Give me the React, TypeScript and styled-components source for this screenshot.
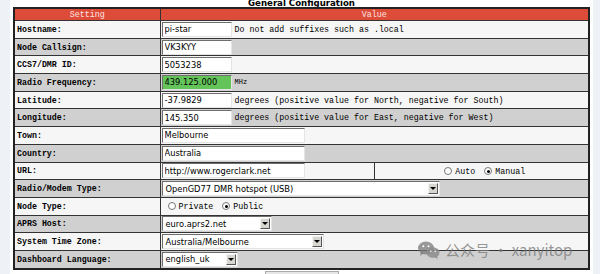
import React from 'react';
import styled, { createGlobalStyle } from 'styled-components';

const GlobalStyle = createGlobalStyle`
  html, body {
    margin: 0;
    padding: 0;
    background: #eef1f5;
    overflow: hidden;
  }
`;

const Page = styled.div`
  width: 600px;
  height: 274px;
  display: flex;
  background: #eef1f5;
  overflow: hidden;
  position: relative;
`;

const Content = styled.div`
  margin-left: 10px;
  width: 583px;
  background: #ffffff;
  display: flex;
  flex-direction: column;
  align-items: center;
`;

const Title = styled.div`
  font-family: 'DejaVu Sans', Verdana, sans-serif;
  font-weight: bold;
  font-size: 8.6px;
  line-height: 10px;
  margin-top: -2px;
  margin-bottom: -1px;
  color: #000;
  text-align: center;
`;

const Table = styled.table`
  width: 577px;
  border-collapse: collapse;
  border: 2px solid #222;
  table-layout: fixed;
  font-family: 'Liberation Mono', 'Courier New', monospace;
  font-size: 8.3px;
`;

const HeadCell = styled.th`
  background: #dd4b39;
  color: #ffe4e0;
  font-weight: normal;
  height: 11px;
  padding: 0;
  border: 1px solid #333;
  text-align: center;
  line-height: 11px;
`;

const Row = styled.tr<{ $shade: boolean }>`
  background: ${({ $shade }) => ($shade ? '#d0d0d0' : '#f6f6f6')};
`;

const Label = styled.td`
  height: 16.7px;
  padding: 0 0 0 2px;
  border: 1px solid #333;
  font-weight: bold;
  white-space: nowrap;
  color: #000;
`;

const Value = styled.td`
  padding: 0 0 0 1px;
  border: 1px solid #333;
  white-space: nowrap;
  color: #000;
`;

const Centered = styled(Value)`
  text-align: center;
`;

const Input = styled.input<{ $w: number; $bg?: string }>`
  box-sizing: border-box;
  width: ${({ $w }) => $w}px;
  height: 15px;
  margin: 0;
  padding: 0 2px;
  vertical-align: middle;
  font-family: 'DejaVu Sans', Verdana, sans-serif;
  font-size: 8.3px;
  color: #000;
  background: ${({ $bg }) => $bg || '#ffffff'};
  border: 1px solid;
  border-color: #6e6e6e #e4e4e4 #e4e4e4 #6e6e6e;
  outline: none;
`;

const Note = styled.span`
  margin-left: 3px;
  vertical-align: middle;
`;

const SmallNote = styled(Note)`
  font-size: 7px;
`;

const SelectBox = styled.span<{ $w: number }>`
  box-sizing: border-box;
  display: inline-flex;
  align-items: center;
  justify-content: space-between;
  width: ${({ $w }) => $w}px;
  height: 15px;
  vertical-align: middle;
  background: #fff;
  border: 1px solid;
  border-color: #6e6e6e #e4e4e4 #e4e4e4 #6e6e6e;
  font-family: 'DejaVu Sans', Verdana, sans-serif;
  font-size: 8.3px;
  padding-left: 3px;
`;

const Arrow = styled.span`
  box-sizing: border-box;
  width: 10px;
  height: 11px;
  margin-right: 1px;
  background: #d8d6d0;
  border: 1px solid;
  border-color: #f4f4f4 #555 #555 #f4f4f4;
  display: flex;
  align-items: center;
  justify-content: center;

  &::after {
    content: '';
    border-left: 3px solid transparent;
    border-right: 3px solid transparent;
    border-top: 3px solid #000;
  }
`;

const RadioGroup = styled.span`
  display: inline-flex;
  align-items: center;
  gap: 3px;
  vertical-align: middle;
`;

const RadioDot = styled.span<{ $on: boolean }>`
  box-sizing: border-box;
  width: 8px;
  height: 8px;
  border-radius: 50%;
  border: 1px solid #777;
  background: #fff;
  display: inline-flex;
  align-items: center;
  justify-content: center;
  margin-left: 6px;

  &::after {
    content: '';
    width: 3px;
    height: 3px;
    border-radius: 50%;
    background: ${({ $on }) => ($on ? '#000' : 'transparent')};
  }
`;

const ButtonRow = styled.div`
  margin-top: 1px;
`;

const ApplyButton = styled.button`
  width: 74px;
  height: 20px;
  background: #e6e6e6;
  border: 1px solid #aaa;
`;

const Watermark = styled.div`
  position: absolute;
  left: 418px;
  top: 240px;
  display: flex;
  align-items: center;
  gap: 5px;
  color: rgba(120, 120, 120, 0.75);
  font-family: 'Noto Sans CJK SC', 'Noto Sans', sans-serif;
  font-size: 15px;
  line-height: 20px;
  pointer-events: none;
`;

const Radio = ({ on, label }: { on: boolean; label: string }) => (
  <>
    <RadioDot $on={on} />
    <span>{label}</span>
  </>
);

const Select = ({ w, text }: { w: number; text: string }) => (
  <SelectBox $w={w}>
    <span>{text}</span>
    <Arrow />
  </SelectBox>
);

const WeChatIcon = () => (
  <svg width="22" height="18" viewBox="0 0 22 18" fill="rgba(120,120,120,0.75)">
    <ellipse cx="8" cy="7" rx="8" ry="6.5" />
    <path d="M3 11 L2 15 L6 12 Z" />
    <ellipse cx="15" cy="11.5" rx="6.5" ry="5.3" fill="rgba(140,140,140,0.85)" />
    <path d="M19 15 L20 18 L16.5 16 Z" fill="rgba(140,140,140,0.85)" />
    <circle cx="5.3" cy="5.3" r="1" fill="#fff" />
    <circle cx="10.5" cy="5.3" r="1" fill="#fff" />
    <circle cx="12.8" cy="10.3" r="0.8" fill="#fff" />
    <circle cx="17.2" cy="10.3" r="0.8" fill="#fff" />
  </svg>
);

const App: React.FC = () => (
  <Page>
    <GlobalStyle />
    <Content>
      <Title>General Configuration</Title>
      <Table>
        <colgroup>
          <col style={{ width: 146 }} />
          <col style={{ width: 214 }} />
          <col />
        </colgroup>
        <thead>
          <tr>
            <HeadCell>Setting</HeadCell>
            <HeadCell colSpan={2}>Value</HeadCell>
          </tr>
        </thead>
        <tbody>
          <Row $shade={false}>
            <Label>Hostname:</Label>
            <Value colSpan={2}>
              <Input $w={70} defaultValue="pi-star" />
              <Note>Do not add suffixes such as .local</Note>
            </Value>
          </Row>
          <Row $shade>
            <Label>Node Callsign:</Label>
            <Value colSpan={2}><Input $w={70} defaultValue="VK3KYY" /></Value>
          </Row>
          <Row $shade={false}>
            <Label>CCS7/DMR ID:</Label>
            <Value colSpan={2}><Input $w={70} defaultValue="5053238" /></Value>
          </Row>
          <Row $shade>
            <Label>Radio Frequency:</Label>
            <Value colSpan={2}>
              <Input $w={70} $bg="#64c45a" defaultValue="439.125.000" />
              <SmallNote>MHz</SmallNote>
            </Value>
          </Row>
          <Row $shade={false}>
            <Label>Latitude:</Label>
            <Value colSpan={2}>
              <Input $w={70} defaultValue="-37.9829" />
              <Note>degrees (positive value for North, negative for South)</Note>
            </Value>
          </Row>
          <Row $shade>
            <Label>Longitude:</Label>
            <Value colSpan={2}>
              <Input $w={70} defaultValue="145.350" />
              <Note>degrees (positive value for East, negative for West)</Note>
            </Value>
          </Row>
          <Row $shade={false}>
            <Label>Town:</Label>
            <Value colSpan={2}><Input $w={143} defaultValue="Melbourne" /></Value>
          </Row>
          <Row $shade>
            <Label>Country:</Label>
            <Value colSpan={2}><Input $w={143} defaultValue="Australia" /></Value>
          </Row>
          <Row $shade={false}>
            <Label>URL:</Label>
            <Value><Input $w={143} defaultValue="http://www.rogerclark.net" /></Value>
            <Centered>
              <RadioGroup>
                <Radio on={false} label="Auto" />
                <Radio on label="Manual" />
              </RadioGroup>
            </Centered>
          </Row>
          <Row $shade>
            <Label>Radio/Modem Type:</Label>
            <Value colSpan={2}><Select w={278} text="OpenGD77 DMR hotspot (USB)" /></Value>
          </Row>
          <Row $shade={false}>
            <Label>Node Type:</Label>
            <Value colSpan={2}>
              <RadioGroup>
                <Radio on={false} label="Private" />
                <Radio on label="Public" />
              </RadioGroup>
            </Value>
          </Row>
          <Row $shade>
            <Label>APRS Host:</Label>
            <Value colSpan={2}><Select w={110} text="euro.aprs2.net" /></Value>
          </Row>
          <Row $shade={false}>
            <Label>System Time Zone:</Label>
            <Value colSpan={2}><Select w={162} text="Australia/Melbourne" /></Value>
          </Row>
          <Row $shade>
            <Label>Dashboard Language:</Label>
            <Value colSpan={2}><Select w={76} text="english_uk" /></Value>
          </Row>
        </tbody>
      </Table>
      <ButtonRow>
        <ApplyButton aria-label="Apply Changes" />
      </ButtonRow>
    </Content>
    <Watermark>
      <WeChatIcon />
      <span>公众号 · xanyitop</span>
    </Watermark>
  </Page>
);

export default App;
